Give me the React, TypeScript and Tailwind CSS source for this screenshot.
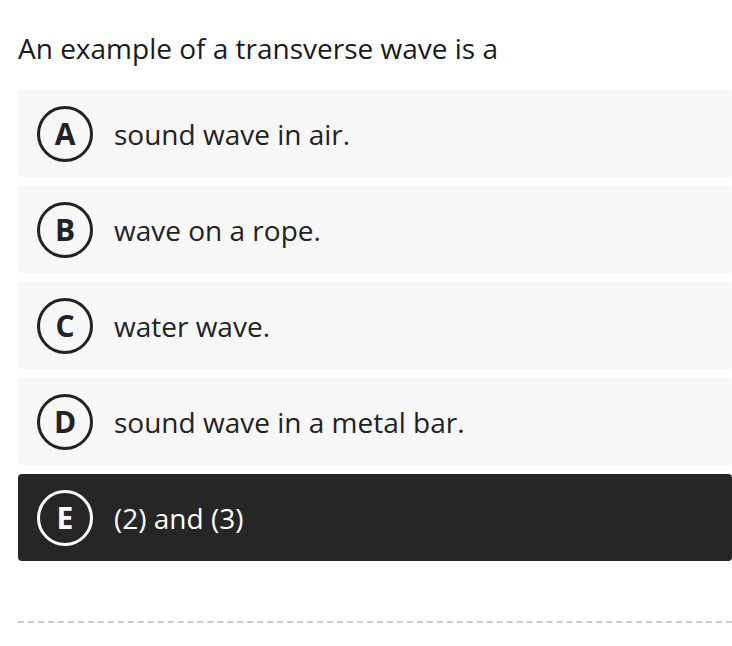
const options = [
  { letter: 'A', text: 'sound wave in air.' },
  { letter: 'B', text: 'wave on a rope.' },
  { letter: 'C', text: 'water wave.' },
  { letter: 'D', text: 'sound wave in a metal bar.' },
  { letter: 'E', text: '(2) and (3)', selected: true },
]

export default function App() {
  return (
    <div
      className="w-[732px] h-[646px] bg-white pl-[18px] pt-[28px] overflow-hidden"
      style={{ fontFamily: '"Open Sans", "Noto Sans", sans-serif' }}
    >
      <h1 className="text-[28px] leading-[40px] text-[#1a1a1a] mb-[22px]">
        An example of a transverse wave is a
      </h1>

      <div className="flex flex-col gap-[9px]">
        {options.map((opt) => (
          <div
            key={opt.letter}
            className={
              opt.selected
                ? 'h-[87px] flex items-center pl-[19px] rounded bg-[#262626] text-white'
                : 'h-[87px] flex items-center pl-[19px] rounded bg-[#f7f7f7] text-[#222]'
            }
          >
            <div
              className={
                opt.selected
                  ? 'w-[56px] h-[56px] rounded-full border-[3px] border-white flex items-center justify-center text-[30px] leading-none font-bold shrink-0'
                  : 'w-[56px] h-[56px] rounded-full border-[3px] border-[#222] flex items-center justify-center text-[30px] leading-none font-bold shrink-0'
              }
            >
              {opt.letter}
            </div>
            <span className="ml-[21px] text-[28px] leading-[40px]">{opt.text}</span>
          </div>
        ))}
      </div>

      <div className="mt-[60px] border-t-2 border-dashed border-[#cccccc]" />
    </div>
  )
}
